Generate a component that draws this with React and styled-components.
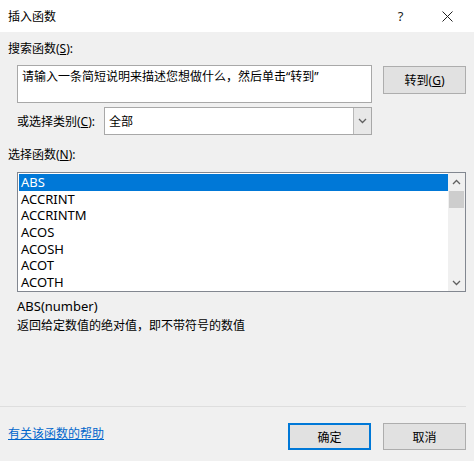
import React from 'react'
import styled, { createGlobalStyle } from 'styled-components'

const GlobalStyle = createGlobalStyle`
  html, body {
    margin: 0;
    padding: 0;
    background: #f0f0f0;
  }
  body {
    font-family: "Noto Sans", "Noto Sans CJK SC", sans-serif;
    font-size: 12px;
    color: #000;
  }
`

const Dialog = styled.div`
  width: 474px;
  height: 461px;
  display: flex;
  flex-direction: column;
  background: #f0f0f0;
  overflow: hidden;
`

const TitleBar = styled.div`
  height: 32px;
  background: #fff;
  display: flex;
  align-items: center;
  padding: 0 3px 0 8px;
`

const Title = styled.div`
  flex: 1;
  font-size: 12px;
`

const TitleButton = styled.div`
  width: 47px;
  height: 32px;
  display: flex;
  align-items: center;
  justify-content: center;
  font-size: 13px;
  color: #222;
`

const Body = styled.div`
  flex: 1;
  padding: 8px 8px 0 8px;
  display: flex;
  flex-direction: column;
`

const Label = styled.div`
  height: 18px;
  line-height: 18px;
  margin-top: ${p => p.$top || 0}px;
  white-space: nowrap;
`

const SearchRow = styled.div`
  display: flex;
  margin-top: 7px;
  padding-left: 9px;
  gap: 11px;
  align-items: flex-start;
`

const SearchBox = styled.div`
  width: 355px;
  height: 38px;
  box-sizing: border-box;
  border: 1px solid #a8a8a8;
  background: #fff;
  padding: 3px 4px;
  line-height: 16px;
`

const Button = styled.div`
  width: 83px;
  height: ${p => p.$h || 28}px;
  box-sizing: border-box;
  margin-top: ${p => p.$top || 0}px;
  background: #e1e1e1;
  border: ${p => p.$primary ? '2px solid #0078d7' : '1px solid #adadad'};
  display: flex;
  align-items: center;
  justify-content: center;
`

const CategoryRow = styled.div`
  display: flex;
  align-items: center;
  margin-top: 4px;
  padding-left: 9px;
  height: 28px;
`

const CategoryLabel = styled.div`
  width: 87px;
  white-space: nowrap;
`

const Select = styled.div`
  width: 268px;
  height: 28px;
  box-sizing: border-box;
  border: 1px solid #a8a8a8;
  background: #fff;
  display: flex;
  align-items: stretch;
`

const SelectValue = styled.div`
  flex: 1;
  padding-left: 4px;
  display: flex;
  align-items: center;
`

const SelectArrow = styled.div`
  width: 17px;
  border-left: 1px solid #b8b8b8;
  background: #e8e8e8;
  display: flex;
  align-items: center;
  justify-content: center;
`

const ListBox = styled.div`
  margin-top: 8px;
  margin-left: 9px;
  width: 449px;
  height: 120px;
  box-sizing: border-box;
  border: 1px solid #828790;
  background: #fff;
  display: flex;
  padding: 1px 0 1px 1px;
`

const Rows = styled.div`
  flex: 1;
`

const Row = styled.div`
  height: 16.7px;
  line-height: 16.7px;
  padding-left: 2px;
  font-size: 13px;
  background: ${p => p.$selected ? '#0078d7' : 'transparent'};
  color: ${p => p.$selected ? '#fff' : '#000'};
`

const ScrollBar = styled.div`
  width: 17px;
  display: flex;
  flex-direction: column;
  background: #f0f0f0;
  margin-top: -1px;
  margin-bottom: -1px;
`

const ScrollArrow = styled.div`
  height: 17px;
  display: flex;
  align-items: center;
  justify-content: center;
`

const ScrollTrack = styled.div`
  flex: 1;
  padding: 1px 1px;
`

const Thumb = styled.div`
  height: 17px;
  background: #cdcdcd;
`

const Info = styled.div`
  padding-left: 9px;
  line-height: 18px;
  margin-top: ${p => p.$top || 0}px;
  font-size: ${p => p.$size || 12}px;
`

const Footer = styled.div`
  height: 55px;
  box-sizing: border-box;
  border-top: 1px solid #dedede;
  margin-right: 8px;
  padding: 16px 0 0 8px;
  display: flex;
  gap: 12px;
`

const HelpLink = styled.a`
  flex: 1;
  color: #0066cc;
  text-decoration: underline;
  margin-top: 2px;
  line-height: 18px;
  cursor: pointer;
`

const Chevron = ({ up }) => (
  <svg width="9" height="6" viewBox="0 0 9 6">
    <polyline
      points={up ? '1,5 4.5,1.5 8,5' : '1,1 4.5,4.5 8,1'}
      fill="none"
      stroke="#606060"
      strokeWidth="1.3"
    />
  </svg>
)

const functions = ['ABS', 'ACCRINT', 'ACCRINTM', 'ACOS', 'ACOSH', 'ACOT', 'ACOTH']

export default function App() {
  return (
    <>
      <GlobalStyle />
      <Dialog>
        <TitleBar>
          <Title>插入函数</Title>
          <TitleButton>?</TitleButton>
          <TitleButton>
            <svg width="11" height="11" viewBox="0 0 11 11">
              <path d="M0.5 0.5 L10.5 10.5 M10.5 0.5 L0.5 10.5" stroke="#222" strokeWidth="1" />
            </svg>
          </TitleButton>
        </TitleBar>
        <Body>
          <Label>搜索函数(<u>S</u>):</Label>
          <SearchRow>
            <SearchBox>请输入一条简短说明来描述您想做什么，然后单击“转到”</SearchBox>
            <Button $top={1}>转到(<u>G</u>)</Button>
          </SearchRow>
          <CategoryRow>
            <CategoryLabel>或选择类别(<u>C</u>):</CategoryLabel>
            <Select>
              <SelectValue>全部</SelectValue>
              <SelectArrow><Chevron /></SelectArrow>
            </Select>
          </CategoryRow>
          <Label $top={11}>选择函数(<u>N</u>):</Label>
          <ListBox>
            <Rows>
              {functions.map((f, i) => (
                <Row key={f} $selected={i === 0}>{f}</Row>
              ))}
            </Rows>
            <ScrollBar>
              <ScrollArrow><Chevron up /></ScrollArrow>
              <ScrollTrack><Thumb /></ScrollTrack>
              <ScrollArrow><Chevron /></ScrollArrow>
            </ScrollBar>
          </ListBox>
          <Info $top={5} $size={13}>ABS(number)</Info>
          <Info $top={2}>返回给定数值的绝对值，即不带符号的数值</Info>
        </Body>
        <Footer>
          <HelpLink>有关该函数的帮助</HelpLink>
          <Button $h={27} $primary>确定</Button>
          <Button $h={27}>取消</Button>
        </Footer>
      </Dialog>
    </>
  )
}
